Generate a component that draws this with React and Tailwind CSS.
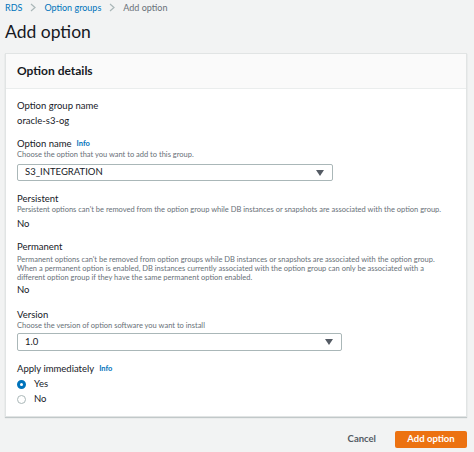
import React from "react";

const Caret = () => (
  <svg width="8" height="6" viewBox="0 0 8 6" className="shrink-0">
    <path d="M0 0 H8 L4 6 Z" fill="#545b64" />
  </svg>
);

const Chevron = () => (
  <svg width="6" height="9" viewBox="0 0 6 9">
    <path d="M1 1 L5 4.5 L1 8" fill="none" stroke="#aab7b8" strokeWidth="1.2" />
  </svg>
);

export default function App() {
  return (
    <div
      className="w-[474px] h-[452px] bg-[#f2f3f3] text-[#16191f] overflow-hidden"
      style={{ fontFamily: 'Lato, "Open Sans", sans-serif' }}
    >
      <div className="px-[5px]">
        <div className="flex items-center h-[14px] text-[9px] leading-none">
          <span className="text-[#0073bb]">RDS</span>
          <span className="mx-[8px]"><Chevron /></span>
          <span className="text-[#0073bb]">Option groups</span>
          <span className="mx-[8px]"><Chevron /></span>
          <span className="text-[#687078]">Add option</span>
        </div>
        <h1 className="text-[17.5px] leading-[24px] mt-[6px] mb-[9px]">Add option</h1>

        <div className="w-[462px] bg-white border border-[#e1e4e4] shadow-[0_1px_1px_rgba(0,28,36,0.2)]">
          <div className="bg-[#fafafa] border-b border-[#eaeded] h-[35px] px-[11px] flex items-center">
            <span className="text-[12px] font-bold">Option details</span>
          </div>
          <div className="px-[11px] pt-[10px] pb-[9px]">
            <div className="text-[9.5px] leading-[13px]">Option group name</div>
            <div className="text-[9.5px] leading-[13px] mt-[2px]">oracle-s3-og</div>

            <div className="mt-[10px] text-[9.5px] leading-[13px] flex items-center">
              Option name
              <span className="ml-[5px] text-[7.5px] font-bold text-[#0073bb]">Info</span>
            </div>
            <div className="text-[7.5px] leading-[10px] text-[#687078]">Choose the option that you want to add to this group.</div>
            <div className="mt-[4px] w-[316px] h-[17px] border border-[#aab7b8] rounded-[2px] flex items-center justify-between px-[7px] pr-[8px]">
              <span className="text-[9.5px]">S3_INTEGRATION</span>
              <Caret />
            </div>

            <div className="mt-[11px] text-[9.5px] leading-[13px]">Persistent</div>
            <div className="text-[7.5px] leading-[10px] text-[#687078]">
              Persistent options can't be removed from the option group while DB instances or snapshots are associated with the option group.
            </div>
            <div className="mt-[2px] text-[9.5px] leading-[13px]">No</div>

            <div className="mt-[10px] text-[9.5px] leading-[13px]">Permanent</div>
            <div className="mt-[2px] text-[7.5px] leading-[9px] text-[#687078] max-w-[430px]">
              Permanent options can't be removed from option groups while DB instances or snapshots are associated with the option group. When a permanent option is enabled, DB instances currently associated with the option group can only be associated with a different option group if they have the same permanent option enabled.
            </div>
            <div className="mt-[1px] text-[9.5px] leading-[13px]">No</div>

            <div className="mt-[12px] text-[9.5px] leading-[13px]">Version</div>
            <div className="text-[7.5px] leading-[10px] text-[#687078]">Choose the version of option software you want to install</div>
            <div className="mt-[2px] w-[325px] h-[18px] border border-[#aab7b8] rounded-[2px] flex items-center justify-between px-[7px] pr-[8px]">
              <span className="text-[9.5px]">1.0</span>
              <Caret />
            </div>

            <div className="mt-[11px] text-[9.5px] leading-[13px] flex items-center">
              Apply immediately
              <span className="ml-[5px] text-[7.5px] font-bold text-[#0073bb]">Info</span>
            </div>
            <div className="mt-[2px] flex items-center h-[15px]">
              <span className="w-[9px] h-[9px] rounded-full border-[3px] border-[#0073bb] bg-white" />
              <span className="ml-[8px] text-[9.5px]">Yes</span>
            </div>
            <div className="flex items-center h-[15px]">
              <span className="w-[9px] h-[9px] rounded-full border border-[#aab7b8] bg-white" />
              <span className="ml-[8px] text-[9.5px]">No</span>
            </div>
          </div>
        </div>

        <div className="w-[462px] flex justify-end items-center mt-[14px]">
          <span className="text-[9.5px] font-bold text-[#545b64] mr-[19px]">Cancel</span>
          <span className="h-[17px] w-[72px] justify-center bg-[#ec7211] text-white text-[9.5px] font-bold flex items-center rounded-[2px]">Add option</span>
        </div>
      </div>
    </div>
  );
}
